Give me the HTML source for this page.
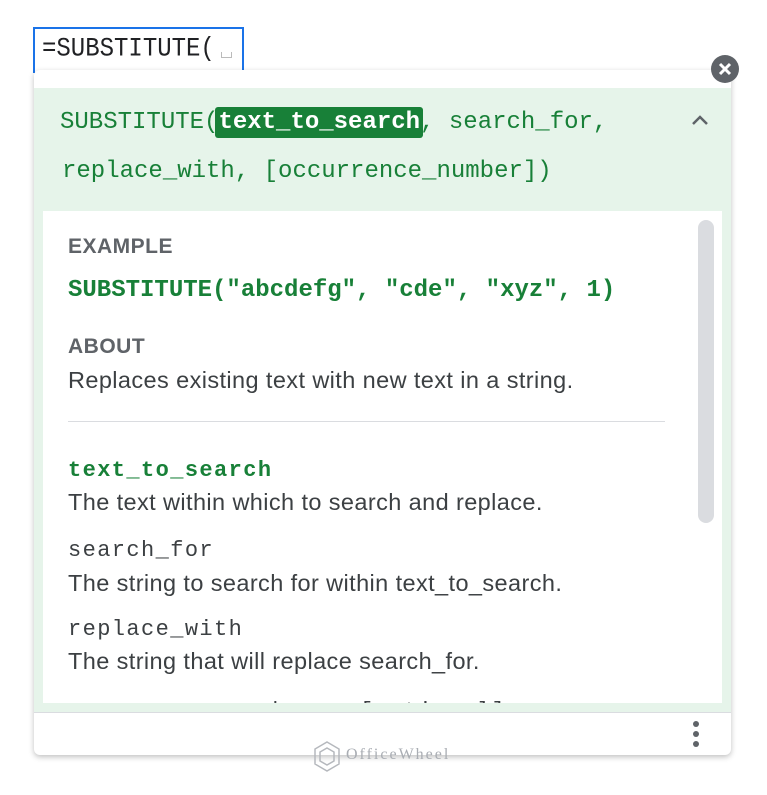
<!DOCTYPE html>
<html><head><style>
*{margin:0;padding:0;box-sizing:border-box}
body{width:767px;height:795px;background:#fff;position:relative;overflow:hidden;font-family:"Liberation Sans",sans-serif}
.mono{font-family:"Liberation Mono",monospace}
.abs{position:absolute;white-space:nowrap}
.d{font-size:23.5px;color:#3c4043;letter-spacing:.4px}
</style></head><body>
<div class="abs" style="left:33px;top:27px;width:211px;height:46px;border:2px solid #1a73e8;border-bottom:none;background:#fff"></div>
<div class="abs mono" style="left:42px;top:32px;font-size:24px;line-height:32px;color:#202124;transform:scaleY(1.12);transform-origin:top left">=SUBSTITUTE(</div>
<div class="abs" style="left:221px;top:52px;width:11px;height:6px;border:1px solid #bbb;border-top:none"></div>
<div class="abs" style="left:34px;top:70px;width:697px;height:685px;background:#fff;border-radius:6px;box-shadow:0 2px 6px rgba(0,0,0,.25)"></div>
<div class="abs" style="left:34px;top:88px;width:697px;height:624px;background:#e6f4ea"></div>
<div class="abs" style="left:43px;top:211px;width:679px;height:492px;background:#fff;overflow:hidden">
 <div class="abs" style="left:655px;top:9px;width:16px;height:303px;border-radius:8px;background:#dadce0"></div>
 <div class="abs" style="left:25px;top:24px;font-size:21px;font-weight:bold;color:#5f6368;letter-spacing:.5px">EXAMPLE</div>
 <div class="abs mono" style="left:25px;top:66px;font-size:24px;font-weight:bold;color:#188038">SUBSTITUTE("abcdefg", "cde", "xyz", 1)</div>
 <div class="abs" style="left:25px;top:124px;font-size:21px;font-weight:bold;color:#5f6368;letter-spacing:.5px">ABOUT</div>
 <div class="abs d" style="left:25px;top:156px">Replaces existing text with new text in a string.</div>
 <div class="abs" style="left:25px;top:210px;width:597px;height:1px;background:#dadce0"></div>
 <div class="abs mono" style="left:25px;top:247px;font-size:22px;font-weight:bold;color:#188038;letter-spacing:1.4px">text_to_search</div>
 <div class="abs d" style="left:25px;top:278px">The text within which to search and replace.</div>
 <div class="abs mono" style="left:25px;top:327px;font-size:22px;color:#3c4043;letter-spacing:1.4px">search_for</div>
 <div class="abs d" style="left:25px;top:359px">The string to search for within text_to_search.</div>
 <div class="abs mono" style="left:25px;top:406px;font-size:22px;color:#3c4043;letter-spacing:1.4px">replace_with</div>
 <div class="abs d" style="left:25px;top:437px">The string that will replace search_for.</div>
 <div class="abs mono" style="left:25px;top:488px;font-size:22px;color:#3c4043;letter-spacing:1.4px">occurrence_number - [optional]</div>
</div>
<div class="abs mono" style="left:60px;top:107px;font-size:24px;line-height:32px;color:#188038">SUBSTITUTE(<span style="background:#188038;color:#fff;font-weight:bold;border-radius:3px;padding:2px 3px;margin:0 -3px">text_to_search</span>, search_for,</div>
<div class="abs mono" style="left:62px;top:156px;font-size:24px;line-height:32px;color:#188038">replace_with, [occurrence_number])</div>
<svg class="abs" style="left:690px;top:113px" width="20" height="14"><path d="M3 11 L10 4 L17 11" fill="none" stroke="#5f6368" stroke-width="2.5"/></svg>
<div class="abs" style="left:34px;top:712px;width:697px;height:1px;background:#dadce0"></div>
<div class="abs" style="left:693px;top:721px;width:6px;height:6px;border-radius:3px;background:#5f6368"></div>
<div class="abs" style="left:693px;top:731px;width:6px;height:6px;border-radius:3px;background:#5f6368"></div>
<div class="abs" style="left:693px;top:741px;width:6px;height:6px;border-radius:3px;background:#5f6368"></div>
<svg class="abs" style="left:710px;top:54px" width="30" height="30"><circle cx="15" cy="15" r="14" fill="#5f6368"/><path d="M10 10 L20 20 M20 10 L10 20" stroke="#fff" stroke-width="3"/></svg>
<svg class="abs" style="left:312px;top:740px" width="30" height="34"><path d="M15 2 L27 9 L27 24 L15 31 L3 24 L3 9 Z M15 8 L22 12 L22 21 L15 25 L8 21 L8 12 Z" fill="none" stroke="#b5b8bd" stroke-width="1.5"/></svg>
<div class="abs" style="left:346px;top:746px;font-family:'Liberation Serif',serif;font-size:16px;color:#a9adb3;letter-spacing:2px">OfficeWheel</div>
</body></html>
